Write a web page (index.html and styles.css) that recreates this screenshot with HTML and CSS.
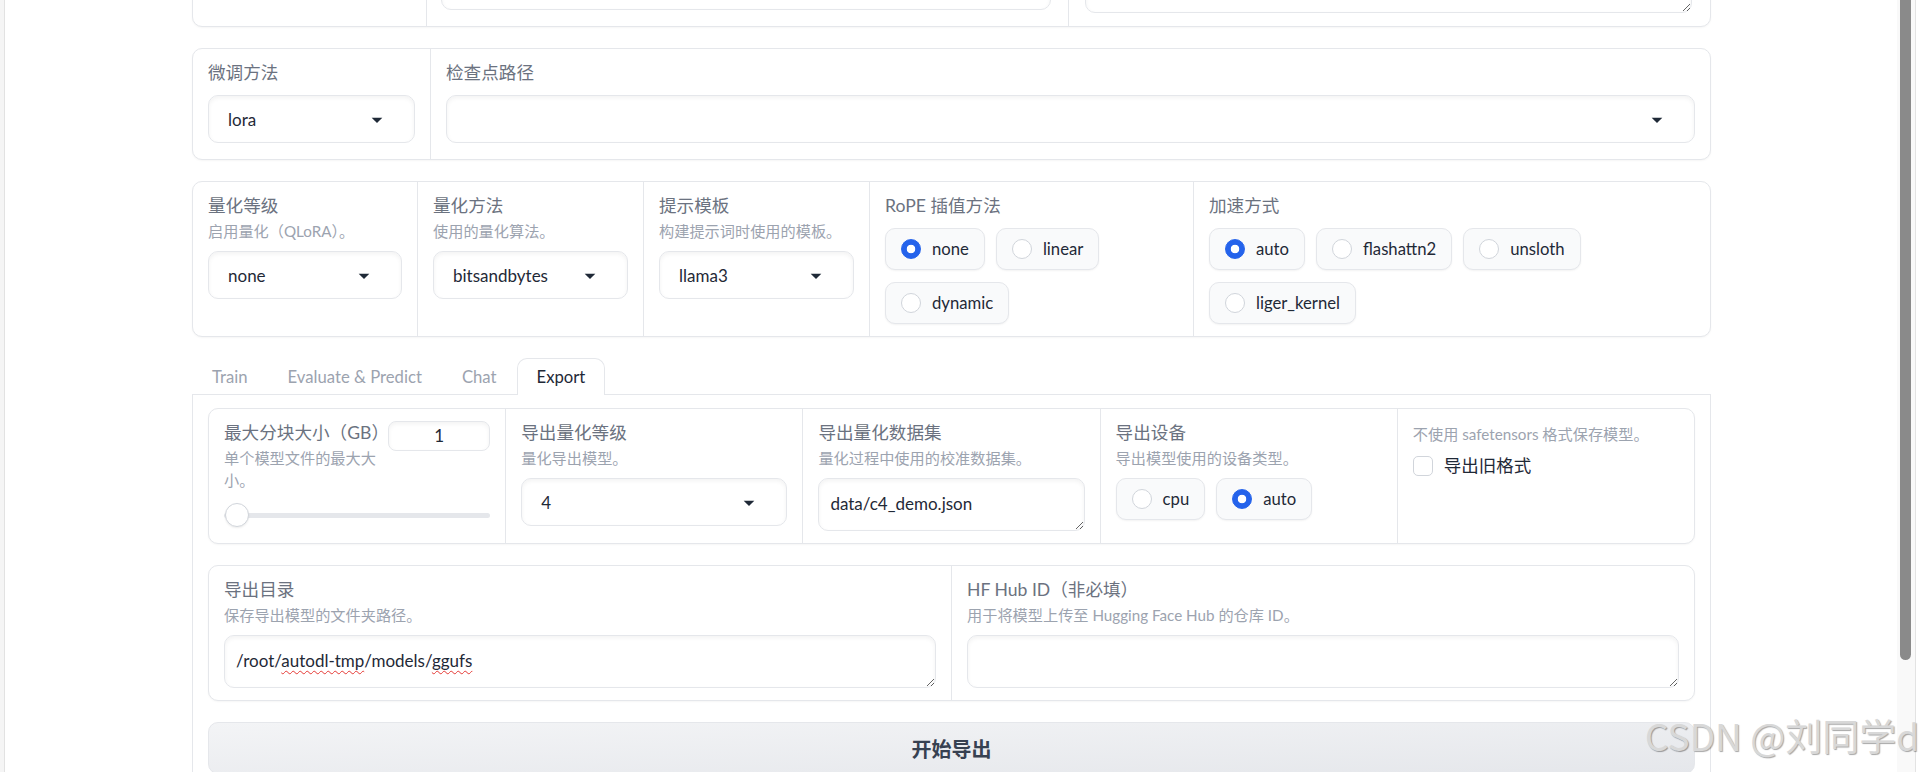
FILE: index.html
```html
<!DOCTYPE html>
<html lang="zh-CN">
<head>
<meta charset="utf-8">
<title>LLaMA Board</title>
<link rel="stylesheet" href="styles.css">
</head>
<body>
<div class="page">
  <div class="edge-left"></div>
  <main class="main">
    <div class="container">

      <section class="card card-top">
        <div class="blk col-lang"></div>
        <div class="blk col-name"><div class="field"></div></div>
        <div class="blk col-path"><div class="textarea ta-top"></div></div>
      </section>

      <section class="card card-ft">
        <div class="blk col-ft">
          <div class="hdr"><div class="lbl">微调方法</div></div>
          <div class="dropdown"><span>lora</span><svg viewBox="0 0 18 18"><path d="M5 8l4 4 4-4z"/></svg></div>
        </div>
        <div class="blk grow">
          <div class="hdr"><div class="lbl">检查点路径</div></div>
          <div class="dropdown"><span></span><svg viewBox="0 0 18 18"><path d="M5 8l4 4 4-4z"/></svg></div>
        </div>
      </section>

      <section class="card card-q">
        <div class="blk col-q1">
          <div class="hdr"><div class="lbl">量化等级</div><div class="info">启用量化（QLoRA）。</div></div>
          <div class="dropdown"><span>none</span><svg viewBox="0 0 18 18"><path d="M5 8l4 4 4-4z"/></svg></div>
        </div>
        <div class="blk col-q2">
          <div class="hdr"><div class="lbl">量化方法</div><div class="info">使用的量化算法。</div></div>
          <div class="dropdown"><span>bitsandbytes</span><svg viewBox="0 0 18 18"><path d="M5 8l4 4 4-4z"/></svg></div>
        </div>
        <div class="blk col-q3">
          <div class="hdr"><div class="lbl">提示模板</div><div class="info">构建提示词时使用的模板。</div></div>
          <div class="dropdown"><span>llama3</span><svg viewBox="0 0 18 18"><path d="M5 8l4 4 4-4z"/></svg></div>
        </div>
        <div class="blk col-q4">
          <div class="hdr"><div class="lbl">RoPE 插值方法</div></div>
          <div class="radios">
            <label class="radio"><span class="dot on"></span>none</label>
            <label class="radio"><span class="dot"></span>linear</label>
            <label class="radio"><span class="dot"></span>dynamic</label>
          </div>
        </div>
        <div class="blk grow">
          <div class="hdr"><div class="lbl">加速方式</div></div>
          <div class="radios">
            <label class="radio"><span class="dot on"></span>auto</label>
            <label class="radio"><span class="dot"></span>flashattn2</label>
            <label class="radio"><span class="dot"></span>unsloth</label>
            <label class="radio"><span class="dot"></span>liger_kernel</label>
          </div>
        </div>
      </section>

      <div class="tabs">
        <nav class="tab-nav">
          <button class="tab">Train</button>
          <button class="tab">Evaluate &amp; Predict</button>
          <button class="tab">Chat</button>
          <button class="tab active">Export</button>
        </nav>
        <div class="tab-panel">

          <section class="card card-exp">
            <div class="blk">
              <div class="slider-head">
                <div class="hdr-text">
                  <div class="lbl nowrap">最大分块大小（GB）</div>
                  <div class="info">单个模型文件的最大大小。</div>
                </div>
                <div class="num">1</div>
              </div>
              <div class="slider"><div class="track"><span class="knob"></span></div></div>
            </div>
            <div class="blk">
              <div class="hdr"><div class="lbl">导出量化等级</div><div class="info">量化导出模型。</div></div>
              <div class="dropdown"><span>4</span><svg viewBox="0 0 18 18"><path d="M5 8l4 4 4-4z"/></svg></div>
            </div>
            <div class="blk">
              <div class="hdr"><div class="lbl">导出量化数据集</div><div class="info">量化过程中使用的校准数据集。</div></div>
              <div class="textarea">data/c4_demo.json</div>
            </div>
            <div class="blk">
              <div class="hdr"><div class="lbl">导出设备</div><div class="info">导出模型使用的设备类型。</div></div>
              <div class="radios">
                <label class="radio"><span class="dot"></span>cpu</label>
                <label class="radio"><span class="dot on"></span>auto</label>
              </div>
            </div>
            <div class="blk">
              <div class="info info-top">不使用 safetensors 格式保存模型。</div>
              <label class="check"><span class="box"></span>导出旧格式</label>
            </div>
          </section>

          <section class="card card-dir">
            <div class="blk">
              <div class="hdr"><div class="lbl">导出目录</div><div class="info">保存导出模型的文件夹路径。</div></div>
              <div class="textarea">/root/<span class="typo">autodl-tmp</span>/models/<span class="typo">ggufs</span></div>
            </div>
            <div class="blk">
              <div class="hdr"><div class="lbl">HF Hub ID（非必填）</div><div class="info">用于将模型上传至 Hugging Face Hub 的仓库 ID。</div></div>
              <div class="textarea"></div>
            </div>
          </section>

          <button class="btn-export">开始导出</button>
        </div>
      </div>

    </div>
  </main>
  <div class="scrollbar"><div class="thumb"></div></div>
  <div class="edge-right"></div>
</div>
<div class="watermark">CSDN @刘同学d</div>
</body>
</html>
```

FILE: styles.css
```css
* { box-sizing: border-box; }

html, body {
  margin: 0;
  padding: 0;
}

body {
  width: 1920px;
  height: 772px;
  overflow: hidden;
  background: #ffffff;
  font-family: Lato, "Noto Sans CJK SC", sans-serif;
  color: #1f2937;
  position: relative;
}

.page {
  display: flex;
  height: 772px;
}

.edge-left {
  flex: none;
  width: 5px;
  background: #f5f5f5;
  border-right: 1px solid #e2e2e2;
}

.main {
  flex: 1;
  min-width: 0;
  overflow: hidden;
}

.scrollbar {
  flex: none;
  width: 18px;
  background: #f9f9f9;
  padding-left: 3px;
  overflow: hidden;
}

.thumb {
  width: 11px;
  height: 670px;
  margin-top: -10px;
  background: #8a8a8a;
  border-radius: 6px;
}

.edge-right {
  flex: none;
  width: 5px;
  background: #ffffff;
  border-left: 1px solid #e3e3e3;
}

.container {
  width: 1519px;
  margin-left: 187px;
  margin-top: -73px;
  display: flex;
  flex-direction: column;
  gap: 21px;
}

/* cards / blocks */
.card {
  display: flex;
  background: #ffffff;
  border: 1px solid #e5e7eb;
  border-radius: 10px;
  box-shadow: 0 1px 2px rgba(0, 0, 0, 0.04);
}

.blk {
  padding: 11px 15px 12px;
  min-width: 0;
}

.blk + .blk { border-left: 1px solid #e5e7eb; }

.grow { flex: 1 1 0; }

.hdr { margin-bottom: 9px; }

.lbl {
  font-size: 17.6px;
  line-height: 26px;
  color: #6b7280;
}

.nowrap { white-space: nowrap; }

.info {
  font-size: 15.2px;
  line-height: 22px;
  margin-top: 1px;
  color: #9ca3af;
}

/* partial top card */
.card-top { height: 100px; }
.card-top .blk {
  display: flex;
  flex-direction: column;
  justify-content: flex-end;
}
.col-lang { flex: 0 0 233px; }
.col-name { flex: 0 0 642px; padding: 0 17px 16px 14px; }
.col-path { flex: 1 1 0; padding: 0 18px 13px 16px; }

.field {
  height: 48px;
  border: 1px solid #e5e7eb;
  border-radius: 10px;
  box-shadow: inset 0 2px 4px rgba(0, 0, 0, 0.05);
}

.ta-top { height: 60px; }

/* card 2 */
.card-ft .blk { padding-bottom: 16px; }
.col-ft { flex: 0 0 237px; }

/* card 3 */
.col-q1 { flex: 0 0 224px; }
.col-q2 { flex: 0 0 226px; }
.col-q3 { flex: 0 0 226px; }
.col-q4 { flex: 0 0 324px; }

/* dropdown */
.dropdown {
  height: 48px;
  display: flex;
  align-items: center;
  justify-content: space-between;
  padding: 0 25px 0 19px;
  border: 1px solid #e5e7eb;
  border-radius: 10px;
  background: #ffffff;
  box-shadow: inset 0 2px 4px rgba(0, 0, 0, 0.05);
  font-size: 17px;
  color: #1f2937;
}

.dropdown svg {
  width: 24px;
  height: 24px;
  flex: none;
  fill: #1f2937;
}

/* radios */
.radios {
  display: flex;
  flex-wrap: wrap;
  gap: 12px 11px;
}

.radio {
  height: 42px;
  display: inline-flex;
  align-items: center;
  gap: 11px;
  padding: 0 15px;
  border: 1px solid #e5e7eb;
  border-radius: 10px;
  background: #f9fafb;
  box-shadow: 0 1px 2px rgba(0, 0, 0, 0.05);
  font-size: 16.7px;
  color: #1f2937;
}

.dot {
  flex: none;
  width: 20px;
  height: 20px;
  border-radius: 50%;
  border: 1px solid #d1d5db;
  background: #ffffff;
}

.dot.on {
  border-color: #2563eb;
  background: radial-gradient(circle, #ffffff 0 4px, #2563eb 4.6px);
}

/* textarea */
.textarea {
  height: 53px;
  padding: 12px 11px;
  border: 1px solid #e5e7eb;
  border-radius: 10px;
  background: #ffffff;
  box-shadow: inset 0 2px 4px rgba(0, 0, 0, 0.05);
  font-size: 17px;
  line-height: 26px;
  color: #1f2937;
  resize: vertical;
  overflow: auto;
  white-space: nowrap;
}

.typo {
  text-decoration: underline wavy #e53935;
  text-decoration-thickness: 1px;
  text-decoration-skip-ink: none;
  text-underline-offset: 3px;
}

/* tabs */
.tab-nav {
  display: flex;
  align-items: flex-start;
  height: 37px;
  border-bottom: 1px solid #e5e7eb;
}

.tab {
  height: 36px;
  padding: 0 19px;
  border: 1px solid transparent;
  border-bottom: none;
  background: none;
  font-family: inherit;
  font-size: 16.7px;
  line-height: 34px;
  color: #9ca3af;
  cursor: pointer;
}

.tab.active {
  position: relative;
  height: 37px;
  color: #1f2937;
  background: #ffffff;
  border-color: #e5e7eb;
  border-radius: 10px 10px 0 0;
}

.tab-panel {
  height: 420px;
  border: 1px solid #e5e7eb;
  border-top: none;
  padding: 13px 15px 0;
  display: flex;
  flex-direction: column;
  gap: 21px;
}

/* export card */
.card-exp .blk,
.card-dir .blk { flex: 1 1 0; }

.slider-head {
  display: flex;
  align-items: flex-start;
}

.hdr-text {
  flex: none;
  width: 160px;
}

.num {
  margin-left: auto;
  margin-top: 1px;
  width: 102px;
  height: 30px;
  border: 1px solid #e5e7eb;
  border-radius: 8px;
  box-shadow: inset 0 2px 4px rgba(0, 0, 0, 0.05);
  text-align: center;
  font-size: 17px;
  line-height: 28px;
  color: #1f2937;
}

.slider {
  height: 24px;
  margin-top: 12px;
  display: flex;
  align-items: center;
}

.track {
  position: relative;
  flex: 1;
  height: 5px;
  border-radius: 3px;
  background: #e5e7eb;
}

.knob {
  position: absolute;
  left: 1px;
  top: 50%;
  width: 24px;
  height: 24px;
  margin-top: -12px;
  border-radius: 50%;
  border: 1px solid #d1d5db;
  background: #ffffff;
  box-shadow: 0 1px 2px rgba(0, 0, 0, 0.08);
}

.info-top {
  margin-top: 2px;
  line-height: 24px;
}

.check {
  display: flex;
  align-items: center;
  gap: 11px;
  margin-top: 7px;
  font-size: 17.5px;
  line-height: 26px;
  color: #1f2937;
}

.box {
  flex: none;
  width: 20px;
  height: 20px;
  border: 1px solid #d1d5db;
  border-radius: 5px;
  background: #ffffff;
}

/* button */
.btn-export {
  flex: none;
  height: 52px;
  border: 1px solid #e5e7eb;
  border-radius: 10px;
  background: linear-gradient(to bottom right, #f3f4f6, #e5e7eb);
  font-family: "Noto Sans CJK SC", sans-serif;
  font-size: 20px;
  font-weight: 700;
  color: #374151;
  cursor: pointer;
}

/* watermark overlay */
.watermark {
  position: absolute;
  left: 1645px;
  top: 717px;
  font-family: "Noto Sans CJK SC", sans-serif;
  font-size: 37px;
  line-height: 37px;
  white-space: nowrap;
  color: #d8d8d8;
  text-shadow: 1px 1px 1px rgba(0, 0, 0, 0.35);
  pointer-events: none;
}
```
